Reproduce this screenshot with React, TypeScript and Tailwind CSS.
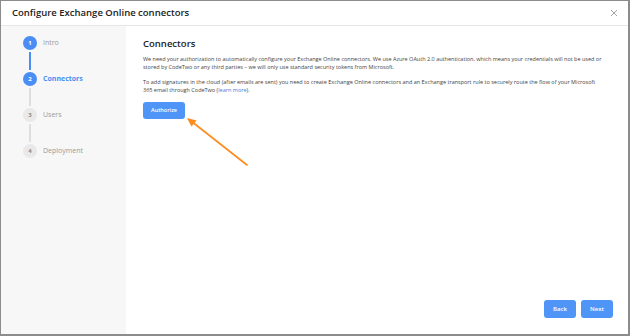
import React from "react";

const steps = [
  { n: 1, label: "Intro", state: "done" },
  { n: 2, label: "Connectors", state: "active" },
  { n: 3, label: "Users", state: "todo" },
  { n: 4, label: "Deployment", state: "todo" },
];

function Stepper() {
  return (
    <div className="flex flex-col pl-[22px] pt-[10px]">
      {steps.map((s, i) => {
        const lit = s.state !== "todo";
        return (
          <div key={s.n} className="flex flex-col">
            <div className="flex items-center gap-[6px] h-[14px]">
              <div
                className={`w-[14px] h-[14px] rounded-full flex items-center justify-center text-[6px] font-bold ${
                  lit ? "bg-[#4a8ef5] text-white" : "bg-[#e9e9e9] text-[#8a8a8a]"
                }`}
              >
                {s.n}
              </div>
              <span
                className={`text-[7px] ${
                  s.state === "active" ? "text-[#4a8ef5] font-bold" : "text-[#9a9a9a]"
                }`}
              >
                {s.label}
              </span>
            </div>
            {i < steps.length - 1 && (
              <div className="h-[22px] flex items-center pl-[6px]">
                <div
                  className={`w-[2px] h-[18px] ${s.state === "done" ? "bg-[#4a8ef5]" : "bg-[#dedede]"}`}
                />
              </div>
            )}
          </div>
        );
      })}
    </div>
  );
}

export default function App() {
  return (
    <div
      className="w-[630px] h-[336px] bg-white border border-r-2 border-b-2 border-[#8c8c8c] flex flex-col text-[#333]"
      style={{ fontFamily: '"Open Sans", "Noto Sans", sans-serif' }}
    >
      <div className="h-[25px] shrink-0 border-b border-[#e6e6e6] flex items-center justify-between pl-[11px] pr-[10px]">
        <h1 className="text-[9.5px] font-semibold text-[#222]">Configure Exchange Online connectors</h1>
        <svg width="8" height="8" viewBox="0 0 8 8" className="text-[#9a9a9a]">
          <path d="M1 1L7 7M7 1L1 7" stroke="currentColor" strokeWidth="0.9" />
        </svg>
      </div>
      <div className="flex-1 flex min-h-0">
        <aside className="w-[125px] shrink-0 bg-[#f7f7f7]">
          <Stepper />
        </aside>
        <main className="flex-1 relative flex flex-col justify-between pl-[17px] pr-[15px] pt-[12px] pb-[16px]">
          <div>
            <h2 className="text-[9.5px] font-semibold text-[#222] leading-[12px]">Connectors</h2>
            <p className="mt-[5px] text-[5.5px] leading-[8px] text-[#444]">
              We need your authorization to automatically configure your Exchange Online connectors. We use Azure OAuth 2.0 authentication, which means your credentials will not be used or stored by CodeTwo or any third parties – we will only use standard security tokens from Microsoft.
            </p>
            <p className="mt-[7px] text-[5.5px] leading-[8px] text-[#444]">
              To add signatures in the cloud (after emails are sent) you need to create Exchange Online connectors and an Exchange transport rule to securely route the flow of your Microsoft
              <br />
              365 email through CodeTwo (<span className="text-[#3b7ddd]">learn more</span>).
            </p>
            <button className="mt-[7px] w-[42px] h-[17px] rounded-[3px] bg-[#4f95f7] text-white text-[5.5px] font-semibold">
              Authorize
            </button>
          </div>
          <div className="flex justify-end gap-[5px]">
            <button className="w-[32px] h-[18px] rounded-[3px] bg-[#4f95f7] text-white text-[6px] font-semibold">Back</button>
            <button className="w-[32px] h-[18px] rounded-[3px] bg-[#4f95f7] text-white text-[6px] font-semibold">Next</button>
          </div>
          <svg className="absolute left-[55px] top-[88px]" width="70" height="60" viewBox="0 0 70 60">
            <path d="M66 51L10 7" stroke="#ff8a1c" strokeWidth="1.6" strokeLinecap="round" />
            <path d="M6 4L15.5 6.5L10.5 12.5Z" fill="#ff8a1c" />
          </svg>
        </main>
      </div>
    </div>
  );
}
